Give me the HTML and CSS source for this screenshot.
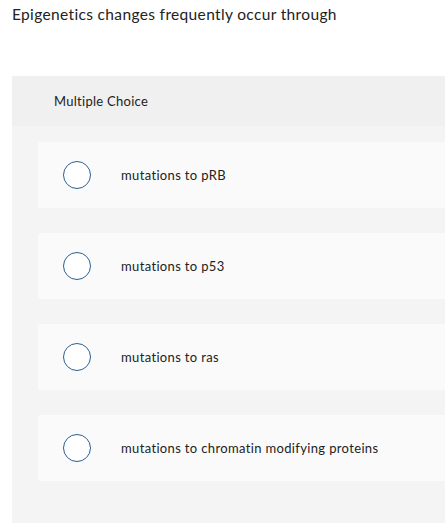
FILE: index.html
```html
<!DOCTYPE html>
<html>
<head>
<meta charset="utf-8">
<link rel="stylesheet" href="styles.css">
</head>
<body>
<div class="question">Epigenetics changes frequently occur through</div>
<div class="panel">
  <div class="panel-header">Multiple Choice</div>
  <div class="options">
    <div class="option"><span class="radio"></span><span class="label">mutations to pRB</span></div>
    <div class="option"><span class="radio"></span><span class="label">mutations to p53</span></div>
    <div class="option"><span class="radio"></span><span class="label">mutations to ras</span></div>
    <div class="option"><span class="radio"></span><span class="label">mutations to chromatin modifying proteins</span></div>
  </div>
</div>
</body>
</html>
```
FILE: styles.css
```css
html, body {
  margin: 0;
  padding: 0;
  background: #ffffff;
}
body {
  font-family: Lato, "Open Sans", sans-serif;
  font-variant-ligatures: none;
  color: #222222;
  width: 445px;
  height: 523px;
  overflow: hidden;
}
.question {
  padding: 5px 12px 0 12px;
  font-size: 15.5px;
  letter-spacing: 0.35px;
  line-height: 18px;
  height: 71px;
}
.panel {
  margin-left: 12px;
  background: #f4f4f4;
  height: 447px;
}
.panel-header {
  background: #f0f0f0;
  height: 50px;
  padding-left: 42px;
  display: flex;
  align-items: center;
  font-size: 13px;
  letter-spacing: 0.27px;
}
.options {
  padding: 16px 0 0 26px;
  display: flex;
  flex-direction: column;
  gap: 25px;
}
.option {
  background: #fafafa;
  border-radius: 3px 0 0 3px;
  height: 66px;
  display: flex;
  align-items: center;
}
.radio {
  box-sizing: border-box;
  width: 28px;
  height: 28px;
  border: 1.5px solid #2a5f96;
  border-radius: 50%;
  background: #ffffff;
  margin-left: 25px;
  flex-shrink: 0;
}
.label {
  margin-left: 30px;
  font-size: 13px;
  letter-spacing: 0.35px;
}
```
